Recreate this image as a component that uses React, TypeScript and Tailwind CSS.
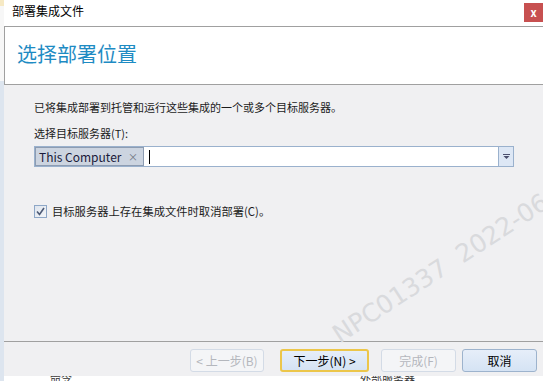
import React from 'react';

const font = { fontFamily: '"Noto Sans CJK SC", "Noto Sans", sans-serif' };

function DropArrow() {
  return (
    <svg width="7" height="5" viewBox="0 0 7 5">
      <rect x="0" y="0" width="7" height="1" fill="#4b4f6e" />
      <path d="M0.5 2 L6.5 2 L3.5 5 Z" fill="#4b4f6e" />
    </svg>
  );
}

function CheckBox() {
  return (
    <div className="w-[13px] h-[13px] border border-[#8ea7c7] bg-gradient-to-br from-[#dfe5ee] to-[#f3f5f8] flex items-center justify-center">
      <svg width="9" height="9" viewBox="0 0 9 9">
        <path d="M1 4.5 L3.5 7.5 L8 1" fill="none" stroke="#4d5a76" strokeWidth="1.6" />
      </svg>
    </div>
  );
}

export default function App() {
  return (
    <div className="w-[543px] h-[381px] relative overflow-hidden bg-white flex text-[#1b1b1b]" style={font}>
      {/* strip of whatever lies behind the dialog */}
      <div className="w-[4px] flex flex-col">
        <div className="h-[6px] bg-[#f6e9c4]" />
        <div className="flex-1 bg-[#f7f7f7]" />
        <div className="h-[300px] bg-[#dde5ef]" />
      </div>

      <div className="flex-1 flex flex-col">
        {/* title bar */}
        <div className="h-[26px] flex items-start justify-between bg-white">
          <div className="pl-[8px] pt-[3px] text-[12px] leading-[16px] text-black">部署集成文件</div>
          <div className="mt-[3px] w-[19px] h-[19px] bg-[#c75050] flex items-center justify-center text-white text-[11px] font-bold leading-none">
            x
          </div>
        </div>

        {/* header */}
        <div className="h-[59px] border-y border-l border-[#a0a0a0] bg-white pl-[12px] pt-[14px]">
          <div className="text-[20px] leading-[26px] text-[#1e8bc3]">选择部署位置</div>
        </div>

        {/* body */}
        <div className="h-[256px] bg-[#f0f0f2] pl-[30px] pt-[14px] text-[11px] leading-[16px]">
          <div>已将集成部署到托管和运行这些集成的一个或多个目标服务器。</div>
          <div className="mt-[10px]">选择目标服务器(T):</div>
          <div className="mt-[5px] w-[480px] h-[21px] border border-[#9ab1cd] bg-white flex">
            <div className="flex-1 flex items-center">
              <div className="h-[19px] w-[109px] border border-[#8d9cb2] bg-[#ccd4e0] flex items-center justify-between px-[3px] text-[12px] text-[#1a1a3a]">
                <span>This Computer</span>
                <span className="text-[10px] text-[#6f7480] pr-[2px]">×</span>
              </div>
              <div className="ml-[5px] w-[1px] h-[14px] bg-black" />
            </div>
            <div className="w-[15px] border-l border-[#9ab1cd] bg-[#dde7f5] flex items-center justify-center">
              <DropArrow />
            </div>
          </div>
          <div className="mt-[36px] flex items-center gap-[5px]">
            <CheckBox />
            <span className="text-[11.3px]">目标服务器上存在集成文件时取消部署(C)。</span>
          </div>
        </div>

        <div className="h-[1px] bg-[#a0a0a0]" />

        {/* footer */}
        <div className="h-[34px] bg-[#f0f0f2] flex justify-end items-start pt-[7px] pr-[6px] text-[12px] leading-none">
          <div className="w-[74px] h-[23px] rounded-[3px] border border-[#d3dbe6] bg-[#f4f5f7] flex items-center justify-center text-[#b4b7bd]">
            &lt; 上一步(B)
          </div>
          <div className="ml-[16px] w-[89px] h-[23px] rounded-[3px] border-2 border-[#ecc64a] bg-gradient-to-b from-[#e6eef9] to-[#d5e3f4] flex items-center justify-center text-black">
            下一步(N) &gt;
          </div>
          <div className="ml-[12px] w-[75px] h-[23px] rounded-[3px] border border-[#d3dbe6] bg-[#f4f5f7] flex items-center justify-center text-[#b4b7bd]">
            完成(F)
          </div>
          <div className="ml-[6px] w-[75px] h-[23px] rounded-[3px] border border-[#9db3cd] bg-gradient-to-b from-[#e6eef9] to-[#d5e3f4] flex items-center justify-center text-black">
            取消
          </div>
        </div>

        {/* whatever lies below the dialog */}
        <div className="flex-1 bg-white overflow-hidden relative">
          <div className="absolute left-[46px] top-[-3px] text-[11px] leading-none text-[#333]">命令</div>
          <div className="absolute left-[356px] top-[-3px] text-[11px] leading-none text-[#333]">外部服务器</div>
        </div>
      </div>

      {/* watermark */}
      <div
        className="absolute left-[342px] top-[322px] text-[25px] leading-none text-[#d9dadd] whitespace-nowrap origin-bottom-left -rotate-[33deg] pointer-events-none"
        style={{ fontFamily: '"DejaVu Sans", sans-serif' }}
      >
        NPC01337&nbsp;&nbsp;2022-06
      </div>
    </div>
  );
}
